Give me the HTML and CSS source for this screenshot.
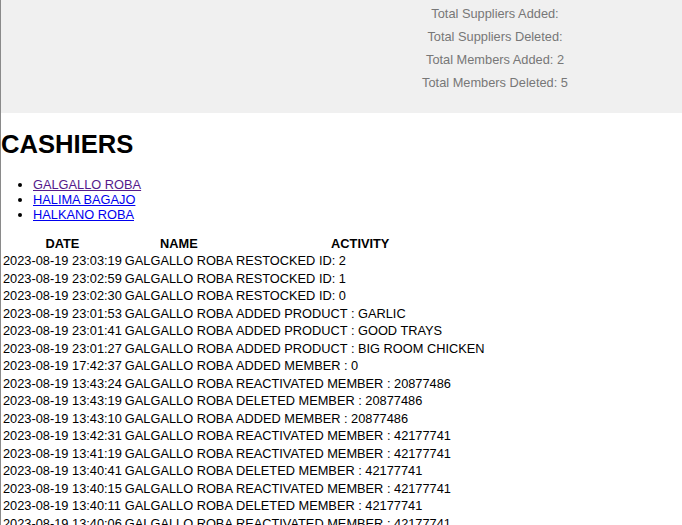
FILE: index.html
```html
<!DOCTYPE html>
<html lang="en">
<head>
    <meta charset="UTF-8">
    <meta name="viewport" content="width=device-width, initial-scale=1.0">
    <title>Cashiers</title>
    <link rel="stylesheet" href="styles.css">
</head>
<body>
    <div class="main">
        <div class="stats">
            <p>Total Suppliers Added: </p>
            <p>Total Suppliers Deleted: </p>
            <p>Total Members Added: 2</p>
            <p>Total Members Deleted: 5</p>
        </div>

        <h1>CASHIERS</h1>
        <ul class="cashiers">
            <li><a href="#" class="visited">GALGALLO ROBA</a></li>
            <li><a href="#">HALIMA BAGAJO</a></li>
            <li><a href="#">HALKANO ROBA</a></li>
        </ul>

        <table class="log">
            <thead>
                <tr><th>DATE</th><th>NAME</th><th>ACTIVITY</th></tr>
            </thead>
            <tbody>
                <tr><td>2023-08-19 23:03:19</td><td>GALGALLO ROBA</td><td>RESTOCKED ID: 2</td></tr>
                <tr><td>2023-08-19 23:02:59</td><td>GALGALLO ROBA</td><td>RESTOCKED ID: 1</td></tr>
                <tr><td>2023-08-19 23:02:30</td><td>GALGALLO ROBA</td><td>RESTOCKED ID: 0</td></tr>
                <tr><td>2023-08-19 23:01:53</td><td>GALGALLO ROBA</td><td>ADDED PRODUCT : GARLIC</td></tr>
                <tr><td>2023-08-19 23:01:41</td><td>GALGALLO ROBA</td><td>ADDED PRODUCT : GOOD TRAYS</td></tr>
                <tr><td>2023-08-19 23:01:27</td><td>GALGALLO ROBA</td><td>ADDED PRODUCT : BIG ROOM CHICKEN</td></tr>
                <tr><td>2023-08-19 17:42:37</td><td>GALGALLO ROBA</td><td>ADDED MEMBER : 0</td></tr>
                <tr><td>2023-08-19 13:43:24</td><td>GALGALLO ROBA</td><td>REACTIVATED MEMBER : 20877486</td></tr>
                <tr><td>2023-08-19 13:43:19</td><td>GALGALLO ROBA</td><td>DELETED MEMBER : 20877486</td></tr>
                <tr><td>2023-08-19 13:43:10</td><td>GALGALLO ROBA</td><td>ADDED MEMBER : 20877486</td></tr>
                <tr><td>2023-08-19 13:42:31</td><td>GALGALLO ROBA</td><td>REACTIVATED MEMBER : 42177741</td></tr>
                <tr><td>2023-08-19 13:41:19</td><td>GALGALLO ROBA</td><td>REACTIVATED MEMBER : 42177741</td></tr>
                <tr><td>2023-08-19 13:40:41</td><td>GALGALLO ROBA</td><td>DELETED MEMBER : 42177741</td></tr>
                <tr><td>2023-08-19 13:40:15</td><td>GALGALLO ROBA</td><td>REACTIVATED MEMBER : 42177741</td></tr>
                <tr><td>2023-08-19 13:40:11</td><td>GALGALLO ROBA</td><td>DELETED MEMBER : 42177741</td></tr>
                <tr><td>2023-08-19 13:40:06</td><td>GALGALLO ROBA</td><td>REACTIVATED MEMBER : 42177741</td></tr>
            </tbody>
        </table>
    </div>
</body>
</html>
```

FILE: styles.css
```css
html, body {
    margin: 0;
    padding: 0;
    background: #fff;
}
body {
    font-family: "Liberation Sans", Arial, sans-serif;
    font-size: 12.8px;
    color: #000;
    overflow: hidden;
}
.main {
    border-left: 1px solid #8a8a8a;
    min-height: 100vh;
}
.stats {
    background-color: #f0f0f0;
    padding: 2px 0 19px 307px;
    text-align: center;
    color: #777;
}
.stats p {
    margin: 0;
    line-height: 23px;
}
h1 {
    font-size: 25.6px;
    margin: 17px 0;
}
.cashiers {
    margin: 18px 0 12.8px;
    padding-left: 32px;
}
.cashiers a {
    color: #0000ee;
}
.cashiers a.visited {
    color: #551a8b;
}
.log {
    border-spacing: 1px;
    margin-top: 3px;
}
.log th,
.log td {
    padding: 1px;
    line-height: 14.5px;
    white-space: nowrap;
}
.log th {
    font-weight: bold;
    text-align: center;
}
.log td {
    text-align: left;
}
```
